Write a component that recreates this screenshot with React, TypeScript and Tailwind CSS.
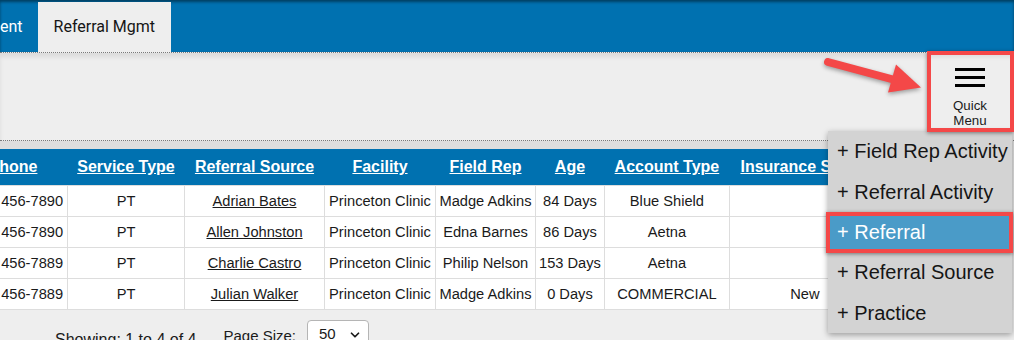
import { ChevronDown } from "lucide-react";

const columns = [
  { label: "Phone", w: 109 },
  { label: "Service Type", w: 117 },
  { label: "Referral Source", w: 140 },
  { label: "Facility", w: 111 },
  { label: "Field Rep", w: 100 },
  { label: "Age", w: 68 },
  { label: "Account Type", w: 125 },
  { label: "Insurance Status", w: 151 },
  { label: "Status", w: 130 },
];

const rows = [
  ["(123) 456-7890", "PT", "Adrian Bates", "Princeton Clinic", "Madge Adkins", "84 Days", "Blue Shield", "", "Open"],
  ["(123) 456-7890", "PT", "Allen Johnston", "Princeton Clinic", "Edna Barnes", "86 Days", "Aetna", "", "Open"],
  ["(123) 456-7889", "PT", "Charlie Castro", "Princeton Clinic", "Philip Nelson", "153 Days", "Aetna", "", "Open"],
  ["(123) 456-7889", "PT", "Julian Walker", "Princeton Clinic", "Madge Adkins", "0 Days", "COMMERCIAL", "New", "Open"],
];

const menuItems = ["Field Rep Activity", "Referral Activity", "Referral", "Referral Source", "Practice"];

export default function App() {
  return (
    <div className="relative w-[1014px] h-[340px] overflow-hidden bg-[#eeeeee] font-['Liberation_Sans',Arial,sans-serif] text-[#1a1a1a]">
      {/* Top nav */}
      <nav className="h-[52px] bg-[#0071b0] shadow-[inset_0_2px_3px_rgba(0,0,0,0.45)] flex items-end font-['Roboto',sans-serif] text-[16px]">
        <div className="h-[50px] flex items-center text-white pr-[15px]">ent</div>
        <div className="h-[50px] px-[16px] flex items-center bg-[#eeeeee] text-[#151515]">Referral Mgmt</div>
      </nav>

      {/* Toolbar */}
      <div className="h-[88px] border-t border-dotted border-[#7a7a7a] shadow-[inset_0_4px_4px_rgba(0,0,0,0.08)] flex justify-end">
        <button className="w-[78px] mr-[5px] pt-[15px] flex flex-col items-center text-[13.3px] leading-[15px] text-[#1a1a1a]">
          <span className="flex flex-col gap-[5px]">
            <span className="block w-[30px] h-[3px] bg-black" />
            <span className="block w-[30px] h-[3px] bg-black" />
            <span className="block w-[30px] h-[3px] bg-black" />
          </span>
          <span className="mt-[11px]">Quick</span>
          <span>Menu</span>
        </button>
      </div>

      {/* Grid */}
      <div className="border-t border-dotted border-[#7a7a7a] pt-[8px] bg-gradient-to-b from-[#dedede] to-[#e9e9e9]">
        <table className="table-fixed border-collapse ml-[-42px] bg-white text-[14.67px]">
          <colgroup>
            {columns.map((c) => (
              <col key={c.label} style={{ width: c.w }} />
            ))}
          </colgroup>
          <thead>
            <tr className="bg-[#0071b0] h-[36px]">
              {columns.map((c) => (
                <th key={c.label} className="p-0 text-center text-white font-bold text-[16px] underline whitespace-nowrap overflow-hidden">
                  {c.label}
                </th>
              ))}
            </tr>
          </thead>
          <tbody>
            {rows.map((r, i) => (
              <tr key={i} className="h-[31px]">
                {r.map((cell, j) => (
                  <td key={j} className="p-0 px-[3px] text-center whitespace-nowrap border border-[#dddddd] overflow-hidden">
                    {j === 2 ? <a className="underline text-[#1a1a1a]">{cell}</a> : cell}
                  </td>
                ))}
              </tr>
            ))}
          </tbody>
        </table>

        {/* Footer */}
        <div className="bg-[#eeeeee] flex items-start pl-[55px] pt-[10px] h-[40px]">
          <span className="mt-[11px] text-[16px] leading-[18px]">Showing: 1 to 4 of 4</span>
          <span className="ml-[27px] mt-[7px] text-[15px] leading-[18px] text-[#1a1a1a]">Page Size:</span>
          <div className="ml-[11px] w-[62px] h-[30px] border border-[#b5b5b5] rounded-[4px] bg-white flex items-center pl-[11px] pr-[6px] justify-between text-[15px]">
            <span>50</span>
            <ChevronDown className="w-[14px] h-[14px]" strokeWidth={3} />
          </div>
        </div>
      </div>

      {/* Dropdown menu */}
      <div className="absolute left-[828px] top-[131px] w-[184px] bg-[#d3d3d3] shadow-[0_2px_6px_rgba(0,0,0,0.35)] text-[20px] text-[#151515]">
        {menuItems.map((m) => (
          <div
            key={m}
            className={
              m === "Referral"
                ? "h-[40.4px] flex items-center pl-[9px] bg-[#4a9bc8] text-white"
                : "h-[40.4px] flex items-center pl-[9px]"
            }
          >
            + {m}
          </div>
        ))}
      </div>

      {/* Annotations */}
      <div className="absolute left-[927px] top-[51px] w-[87px] h-[81px] border-[4px] border-[#f44848] shadow-[0_1px_4px_rgba(0,0,0,0.45)]" />
      <div className="absolute left-[826px] top-[212px] w-[187px] h-[41px] border-[4px] border-[#f44848] shadow-[0_1px_4px_rgba(0,0,0,0.45)]" />
      <svg className="absolute left-[815px] top-[48px] drop-shadow-[0_2px_2px_rgba(0,0,0,0.35)]" width="120" height="55" viewBox="0 0 120 55">
        <line x1="13" y1="14" x2="80" y2="32" stroke="#f44848" strokeWidth="8" strokeLinecap="round" />
        <polygon points="81,16.5 106,39.5 73,44.5" fill="#f44848" />
      </svg>
    </div>
  );
}
